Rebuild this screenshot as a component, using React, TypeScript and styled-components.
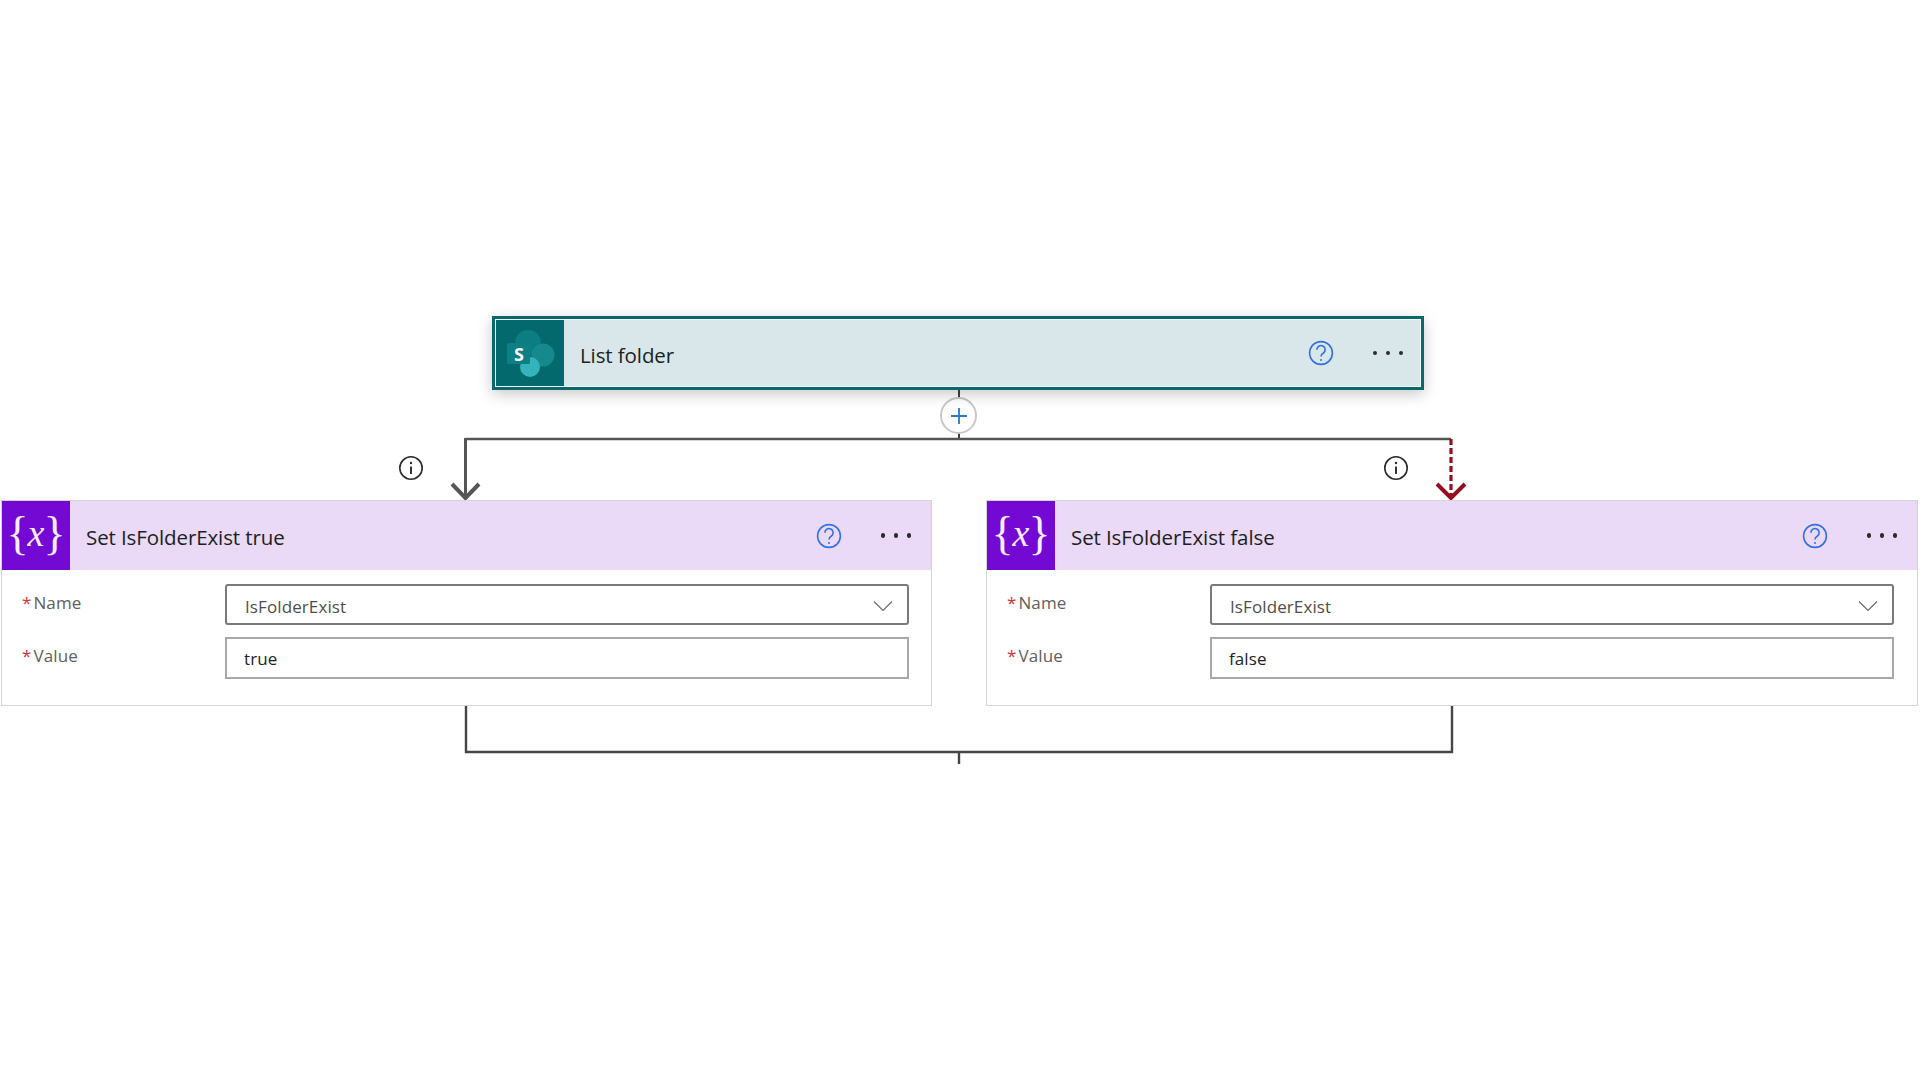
import styled, { createGlobalStyle } from "styled-components";

const GlobalStyle = createGlobalStyle`
  html, body {
    margin: 0;
    background: #fff;
    font-family: "Open Sans", "Noto Sans", sans-serif;
  }
  * {
    box-sizing: border-box;
  }
`;

const Canvas = styled.main`
  width: 1920px;
  height: 1080px;
  padding-top: 316px;
  overflow: hidden;
  display: flex;
  flex-direction: column;
`;

const TriggerCard = styled.section`
  width: 932px;
  height: 74px;
  margin-left: 492px;
  flex: none;
  display: flex;
  align-items: stretch;
  background: #d9e7ea;
  border: 3px solid #0a686c;
  outline: 1px solid #f2f8f8;
  outline-offset: -4px;
  box-shadow: 0 4px 14px rgba(0, 0, 0, 0.22);
  position: relative;
  z-index: 1;
`;

const IconTile = styled.div<{ $color: string; $size: number }>`
  width: ${(props) => props.$size}px;
  flex: none;
  display: flex;
  align-items: center;
  justify-content: center;
  background: ${(props) => props.$color};
`;

const TriggerTile = styled(IconTile)`
  margin: 1px 0 0 1px;
`;

const Title = styled.h2<{ $left: number; $top: number }>`
  margin: ${(props) => props.$top}px 0 0 ${(props) => props.$left}px;
  align-self: center;
  font-size: 20.5px;
  font-weight: 400;
  color: #201f1e;
  letter-spacing: -0.1px;
`;

const HeaderActions = styled.div<{ $right: number }>`
  margin-left: auto;
  padding-right: ${(props) => props.$right}px;
  display: flex;
  align-items: center;
  gap: 39px;
  color: #2f6fe4;
`;

const Dots = styled.div`
  display: flex;
  gap: 8.5px;
  span {
    width: 4.5px;
    height: 4.5px;
    border-radius: 50%;
    background: #2b2b2b;
  }
`;

const ConnectorArea = styled.div`
  position: relative;
  height: 110px;
  flex: none;
  svg.lines {
    display: block;
  }
`;

const AddButton = styled.button`
  position: absolute;
  left: 940px;
  top: 7px;
  width: 37px;
  height: 37px;
  padding: 0;
  display: flex;
  align-items: center;
  justify-content: center;
  border: 2px solid #c8c8c8;
  border-radius: 50%;
  background: #fff;
`;

const InfoMark = styled.span<{ $left: number }>`
  position: absolute;
  left: ${(props) => props.$left}px;
  top: 65px;
  display: flex;
  color: #2b2b2b;
`;

const CardRow = styled.div`
  flex: none;
  display: grid;
  grid-template-columns: 931px 932px;
  gap: 54px;
  padding-left: 1px;
`;

const ActionCard = styled.section`
  height: 206px;
  border: 1px solid #d6d3d6;
  background: #fff;
`;

const ActionHeader = styled.header`
  height: 69px;
  display: flex;
  align-items: stretch;
  background: #ead9f7;
`;

const FormGrid = styled.div`
  display: grid;
  grid-template-columns: 203px 684px;
  grid-template-rows: 41px 42px;
  row-gap: 12px;
  padding: 14px 0 0 20px;
`;

const SelectBox = styled.div`
  display: flex;
  align-items: center;
  justify-content: space-between;
  padding: 3px 14px 0 18px;
  border: 2px solid #7a7a7a;
  border-radius: 3px;
  font-size: 17px;
  letter-spacing: 0.1px;
  color: #4f4d4b;
`;

const ValueBox = styled.div`
  display: flex;
  align-items: center;
  padding: 1px 0 0 17px;
  border: 2px solid #a8a8a8;
  font-size: 17px;
  letter-spacing: 0.1px;
  color: #201f1e;
`;

const FieldLabel = styled.label`
  align-self: center;
  margin-top: -4px;
  display: flex;
  gap: 2px;
  font-size: 17px;
  letter-spacing: 0.1px;
  color: #605e5c;
  &::before {
    content: "*";
    color: #d13438;
  }
  ${SelectBox} + & {
    margin-top: -6px;
  }
`;

const SharePointIcon = () => (
  <svg width="52" height="52" viewBox="0 0 52 52">
    <circle cx="24" cy="15" r="13" fill="#0c7d81" />
    <circle cx="39" cy="27" r="11.5" fill="#15898e" />
    <circle cx="26" cy="39" r="10" fill="#33b4bb" />
    <rect x="3" y="15" width="23" height="21" rx="1.5" fill="#0e8085" />
    <text
      x="15"
      y="33"
      fill="#fff"
      fontSize="18"
      fontWeight="700"
      fontFamily="'Open Sans', sans-serif"
      textAnchor="middle"
    >
      S
    </text>
  </svg>
);

const VariableIcon = () => (
  <svg width="68" height="69" viewBox="0 0 68 69">
    <g fill="#f6ecff" fontFamily="'Liberation Serif', serif" textAnchor="middle">
      <text x="15.5" y="48" fontSize="46">
        {"{"}
      </text>
      <text x="34" y="45" fontSize="38" fontStyle="italic">
        x
      </text>
      <text x="52.5" y="48" fontSize="46">
        {"}"}
      </text>
    </g>
  </svg>
);

const HelpIcon = () => (
  <svg width="26" height="26" viewBox="0 0 26 26" fill="none" stroke="currentColor" strokeWidth="1.6">
    <circle cx="13" cy="13" r="11.4" />
    <path d="M8.9 9.7 a4.1 4.1 0 1 1 6.5 3.3 c-1.6 1 -2.4 1.8 -2.4 3.6" />
    <circle cx="13" cy="20" r="1" fill="currentColor" stroke="none" />
  </svg>
);

const InfoIcon = () => (
  <svg width="26" height="26" viewBox="0 0 26 26" fill="none" stroke="currentColor" strokeWidth="1.6">
    <circle cx="13" cy="13" r="11.2" />
    <path d="M13 11.4 V19" strokeWidth="1.9" />
    <circle cx="13" cy="8" r="1.2" fill="currentColor" stroke="none" />
  </svg>
);

const Chevron = () => (
  <svg width="20" height="12" viewBox="0 0 20 12">
    <path d="M1 1.5 L10 10.5 L19 1.5" fill="none" stroke="#6b6b6b" strokeWidth="1.2" />
  </svg>
);

const Actions = ({ right }: { right: number }) => (
  <HeaderActions $right={right}>
    <HelpIcon />
    <Dots>
      <span />
      <span />
      <span />
    </Dots>
  </HeaderActions>
);

const BranchLines = () => (
  <svg className="lines" width="1920" height="110" viewBox="0 0 1920 110">
    <g fill="none">
      <path d="M959 0 V50" stroke="#404040" strokeWidth="2" />
      <path d="M1451 49 H465.5" stroke="#555" strokeWidth="2.4" />
      <path d="M465.5 48 V107" stroke="#555" strokeWidth="3" />
      <path d="M452 94 L465.5 108 L479 94" stroke="#555" strokeWidth="4" />
      <path d="M1451 49 V106" stroke="#94101f" strokeWidth="3.2" strokeDasharray="6 3" />
      <path d="M1437 94 L1451 108 L1465 94" stroke="#94101f" strokeWidth="4" />
    </g>
  </svg>
);

const MergeLines = () => (
  <svg width="1920" height="60" viewBox="0 0 1920 60" style={{ display: "block" }}>
    <path d="M466 0 V46 H1452 V0 M959 46 V58" fill="none" stroke="#454545" strokeWidth="2.4" />
  </svg>
);

const variables = [
  { title: "Set IsFolderExist true", value: "true" },
  { title: "Set IsFolderExist false", value: "false" },
];

export default function App() {
  return (
    <Canvas>
      <GlobalStyle />
      <TriggerCard>
        <TriggerTile $color="#04696d" $size={68}>
          <SharePointIcon />
        </TriggerTile>
        <Title $left={16} $top={3}>
          List folder
        </Title>
        <Actions right={18} />
      </TriggerCard>

      <ConnectorArea>
        <BranchLines />
        <AddButton aria-label="Add step">
          <svg width="16" height="16" viewBox="0 0 16 16">
            <path d="M8 0 V16 M0 8 H16" stroke="#2b77c9" strokeWidth="1.8" />
          </svg>
        </AddButton>
        <InfoMark $left={398}>
          <InfoIcon />
        </InfoMark>
        <InfoMark $left={1383}>
          <InfoIcon />
        </InfoMark>
      </ConnectorArea>

      <CardRow>
        {variables.map((item) => (
          <ActionCard key={item.title}>
            <ActionHeader>
              <IconTile $color="#7309d2" $size={68}>
                <VariableIcon />
              </IconTile>
              <Title $left={16} $top={2}>
                {item.title}
              </Title>
              <Actions right={20} />
            </ActionHeader>
            <FormGrid>
              <FieldLabel>Name</FieldLabel>
              <SelectBox>
                IsFolderExist
                <Chevron />
              </SelectBox>
              <FieldLabel>Value</FieldLabel>
              <ValueBox>{item.value}</ValueBox>
            </FormGrid>
          </ActionCard>
        ))}
      </CardRow>

      <MergeLines />
    </Canvas>
  );
}
